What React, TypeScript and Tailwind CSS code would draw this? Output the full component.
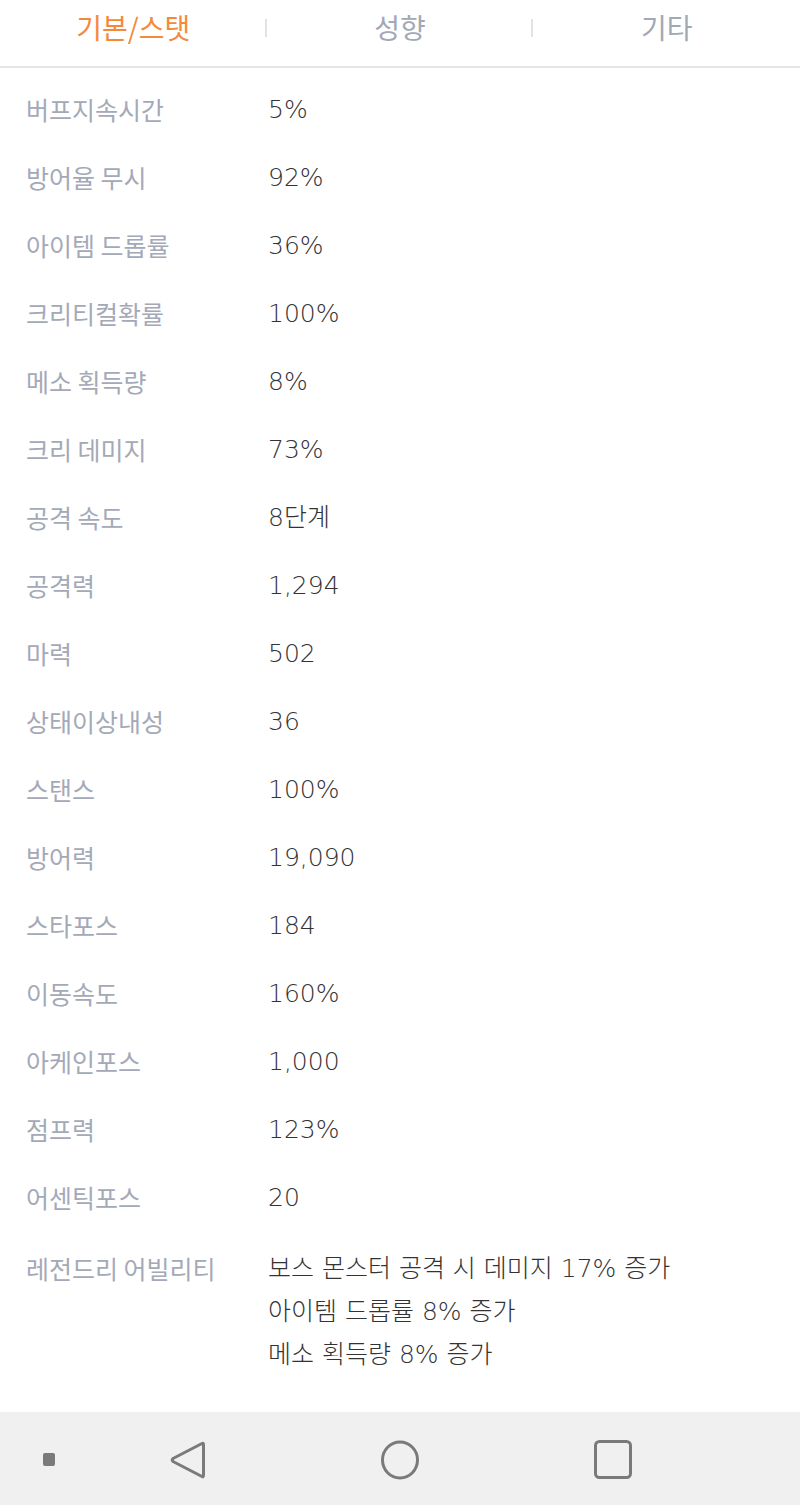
import React from 'react';

const stats = [
  { label: '버프지속시간', value: '5%' },
  { label: '방어율 무시', value: '92%' },
  { label: '아이템 드롭률', value: '36%' },
  { label: '크리티컬확률', value: '100%' },
  { label: '메소 획득량', value: '8%' },
  { label: '크리 데미지', value: '73%' },
  { label: '공격 속도', value: '8단계' },
  { label: '공격력', value: '1,294' },
  { label: '마력', value: '502' },
  { label: '상태이상내성', value: '36' },
  { label: '스탠스', value: '100%' },
  { label: '방어력', value: '19,090' },
  { label: '스타포스', value: '184' },
  { label: '이동속도', value: '160%' },
  { label: '아케인포스', value: '1,000' },
  { label: '점프력', value: '123%' },
  { label: '어센틱포스', value: '20' },
];

const legendary = ['보스 몬스터 공격 시 데미지 17% 증가', '아이템 드롭률 8% 증가', '메소 획득량 8% 증가'];

const tabs = ['기본/스탯', '성향', '기타'];

const valueFont = { fontFamily: '"DejaVu Sans", "Noto Sans CJK KR", sans-serif' };

const App = () => {
  return (
    <div
      className="w-[800px] h-[1505px] bg-white flex flex-col overflow-hidden"
      style={{ fontFamily: '"Noto Sans CJK KR", "Noto Sans", sans-serif' }}
    >
      {/* Tabs */}
      <div className="h-[68px] flex items-start border-b-2 border-[#e6e6e6] shrink-0">
        {tabs.map((tab, index) => (
          <div key={tab} className="flex-1 h-[54px] flex items-center relative">
            <span
              className={`w-full text-center text-[28px] leading-none ${index === 0 ? 'text-[#f5893a]' : 'text-[#a3a8b6]'}`}
            >
              {tab}
            </span>
            {index < 2 && <span className="absolute right-0 top-[19px] w-[2px] h-[18px] bg-[#e3e3e3]" />}
          </div>
        ))}
      </div>

      {/* Stats */}
      <div className="flex-1 flex flex-col pt-[8px]">
        {stats.map((stat) => (
          <div key={stat.label} className="h-[68px] flex items-center text-[25px]">
            <div className="w-[268px] pl-[26px] text-[#a4a9b8]">{stat.label}</div>
            <div className="text-[#333333] font-extralight" style={valueFont}>
              {stat.value}
            </div>
          </div>
        ))}
        <div className="flex items-start text-[25px] pt-[15px]">
          <div className="w-[268px] pl-[26px] text-[#a4a9b8] leading-[43px]">레전드리 어빌리티</div>
          <div className="flex flex-col text-[#333333] leading-[43px] font-extralight" style={valueFont}>
            {legendary.map((line) => (
              <div key={line}>{line}</div>
            ))}
          </div>
        </div>
      </div>

      {/* Nav bar */}
      <div className="h-[93px] bg-[#f0f0f0] shrink-0 relative flex items-center">
        <div className="absolute left-[43px] top-[41px] w-[12px] h-[13px] rounded-[2px] bg-[#7a7a7a]" />
        <svg className="absolute left-[168px] top-[27px]" width="40" height="42" viewBox="0 0 40 42">
          <path
            d="M34 4.5 Q35.5 3.5 35.5 6 V36 Q35.5 38.5 34 37.5 L5 22.5 Q3.5 21 5 19.5 Z"
            fill="none"
            stroke="#7a7a7a"
            strokeWidth="3"
            strokeLinejoin="round"
          />
        </svg>
        <svg className="absolute left-[380px] top-[27px]" width="40" height="42" viewBox="0 0 40 42">
          <ellipse cx="20" cy="21" rx="17.5" ry="18" fill="none" stroke="#7a7a7a" strokeWidth="3" />
        </svg>
        <svg className="absolute left-[593px] top-[27px]" width="40" height="42" viewBox="0 0 40 42">
          <rect x="2.5" y="2.5" width="35" height="36" rx="4" fill="none" stroke="#7a7a7a" strokeWidth="3" />
        </svg>
      </div>
    </div>
  );
};

export default App;
